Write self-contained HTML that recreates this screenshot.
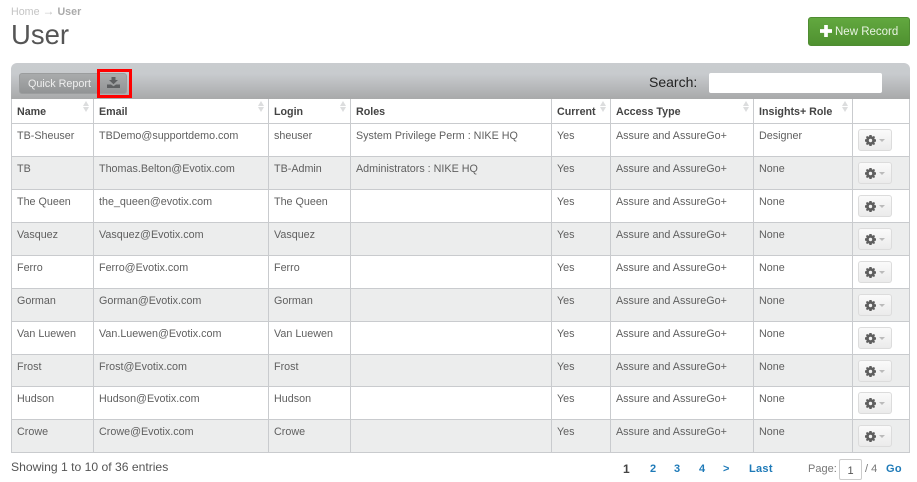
<!DOCTYPE html>
<html><head><meta charset="utf-8"><title>User</title>
<style>
*{box-sizing:border-box}
html,body{margin:0;padding:0;background:#fff;width:917px;height:480px;overflow:hidden;font-family:"Liberation Sans",sans-serif;color:#555}
.abs{position:absolute}
.crumb{left:11px;top:5px;font-size:10.700px;line-height:13px;color:#c4c4c4}
.crumb b{color:#aaa}
.crumb span{font-size:12px}
h1{position:absolute;left:11px;top:18px;margin:0;font-size:27.500px;line-height:34px;font-weight:400;color:#555}
.new{left:808px;top:17px;width:102px;height:29px;background:linear-gradient(#62a83f,#4f9130);border:1px solid #4f8c32;border-radius:3px;color:#e8f3e2;font-size:11.500px;line-height:28px;padding-left:26px}
.new svg{position:absolute;left:11px;top:7px}
.bar{left:11px;top:63px;width:899px;height:36px;background:linear-gradient(#c9cccf 0,#c8cbce 30%,#a8a9aa 100%);border-radius:6px 6px 0 0}
.qr{left:19px;top:73px;width:108px;height:21px;background:linear-gradient(#a9abac,#929495);border:1px solid #9b9d9e;border-radius:3px;color:#eee;font-size:10.800px;line-height:20px;padding-left:8px}
.red{left:97px;top:69px;width:35px;height:29px;border:3px solid #f00}
.lbl{left:649px;top:74px;font-size:14px;line-height:16px;color:#222}
.inp{left:709px;top:73px;width:173px;height:20px;background:#fff;border-radius:2px}
table{position:absolute;left:11px;top:99px;border-collapse:collapse;table-layout:fixed;width:898px;font-size:10.750px}
td,th{border:1px solid #c9cbce;padding:0 5px;vertical-align:top;text-align:left;overflow:hidden;white-space:nowrap;position:relative}
th{height:24px;padding-top:6px;line-height:14px;font-size:10.700px;font-weight:700;color:#444;background:#fff}
td{height:33px;padding-top:5px;line-height:14px;color:#5f5f5f}
tr:first-child th{border-top:0}
tbody tr:nth-child(even) td{background:#eceded}
tr.s td{height:32px}
th i{position:absolute;right:3px;top:2px;width:7px;height:11px}
th i:before,th i:after{content:"";position:absolute;left:0;border-left:3.500px solid transparent;border-right:3.500px solid transparent}
th i:before{top:0;border-bottom:5px solid #dcddde}
th i:after{top:6px;border-top:5px solid #dcddde}
.gear{position:absolute;left:5px;top:5px;width:34px;height:22px;background:linear-gradient(#fafafa,#ebebeb);border:1px solid #dcdcdc;border-radius:3px}
td.a{padding:0}
.gear svg{position:absolute;left:6px;top:5px}
.gear u{position:absolute;left:20px;top:9px;border-left:3px solid transparent;border-right:3px solid transparent;border-top:3px solid #bbb}
.foot{left:11px;top:460px;font-size:12.150px;line-height:15px;color:#555}
.p{top:462px;font-size:11px;line-height:14px;font-weight:700;color:#1e7ab8;letter-spacing:.3px}
.pi{left:839px;top:459px;width:23px;height:21px;border:1px solid #ccc;border-radius:2px;font-size:11px;color:#555;text-align:center;line-height:22px;background:#fff}
</style></head><body>
<svg width="0" height="0" style="position:absolute"><symbol id="g" viewBox="0 0 13 13"><path d="M5.200 0h2.600l.3 1.500 1.100.5 1.300-.9 1.400 1.400-.9 1.300.5 1.100 1.500.3v2.600l-1.500.3-.5 1.100.9 1.300-1.400 1.400-1.300-.9-1.100.5-.3 1.500H5.200l-.3-1.500-1.100-.5-1.300.9-1.400-1.400.9-1.300-.5-1.100L0 7.800V5.200l1.500-.3.500-1.100-.9-1.300 1.400-1.400 1.300.9 1.100-.5zM6.500 4.500a2 2 0 1 0 0 4 2 2 0 0 0 0-4z" fill="#5e5e5e" fill-rule="evenodd"/></symbol></svg>
<div class="abs crumb">Home <span>→</span> <b>User</b></div>
<h1>User</h1>
<div class="abs new"><svg width="12" height="12" viewBox="0 0 13 13"><path d="M4.500 0h4v4.500H13v4H8.500V13h-4V8.500H0v-4h4.500z" fill="#fff"/></svg>New Record</div>
<div class="abs bar"></div>
<div class="abs qr">Quick Report</div>
<svg class="abs" style="left:107px;top:77px" width="13" height="11" viewBox="0 0 13 11"><path d="M4.500 0h4v3H11L6.500 7.200 2 3h2.500zM0 7.500h4l2.500 1.700L9 7.500h4V11H0z" fill="#5e6062"/></svg>
<div class="abs red"></div>
<div class="abs lbl">Search:</div>
<div class="abs inp"></div>
<table>
<colgroup><col style="width:82px"><col style="width:175px"><col style="width:82px"><col style="width:201px"><col style="width:59px"><col style="width:143px"><col style="width:99px"><col style="width:57px"></colgroup>
<thead><tr><th>Name<i></i></th><th>Email<i></i></th><th>Login<i></i></th><th>Roles</th><th>Current<i></i></th><th>Access Type<i></i></th><th>Insights+ Role<i></i></th><th></th></tr></thead>
<tbody>
<tr><td>TB-Sheuser</td><td>TBDemo@supportdemo.com</td><td>sheuser</td><td>System Privilege Perm : NIKE HQ</td><td>Yes</td><td>Assure and AssureGo+</td><td>Designer</td><td class="a"><div class="gear"><svg width="11" height="11"><use href="#g"/></svg><u></u></div></td></tr>
<tr><td>TB</td><td>Thomas.Belton@Evotix.com</td><td>TB-Admin</td><td>Administrators : NIKE HQ</td><td>Yes</td><td>Assure and AssureGo+</td><td>None</td><td class="a"><div class="gear"><svg width="11" height="11"><use href="#g"/></svg><u></u></div></td></tr>
<tr><td>The Queen</td><td>the_queen@evotix.com</td><td>The Queen</td><td></td><td>Yes</td><td>Assure and AssureGo+</td><td>None</td><td class="a"><div class="gear"><svg width="11" height="11"><use href="#g"/></svg><u></u></div></td></tr>
<tr><td>Vasquez</td><td>Vasquez@Evotix.com</td><td>Vasquez</td><td></td><td>Yes</td><td>Assure and AssureGo+</td><td>None</td><td class="a"><div class="gear"><svg width="11" height="11"><use href="#g"/></svg><u></u></div></td></tr>
<tr><td>Ferro</td><td>Ferro@Evotix.com</td><td>Ferro</td><td></td><td>Yes</td><td>Assure and AssureGo+</td><td>None</td><td class="a"><div class="gear"><svg width="11" height="11"><use href="#g"/></svg><u></u></div></td></tr>
<tr><td>Gorman</td><td>Gorman@Evotix.com</td><td>Gorman</td><td></td><td>Yes</td><td>Assure and AssureGo+</td><td>None</td><td class="a"><div class="gear"><svg width="11" height="11"><use href="#g"/></svg><u></u></div></td></tr>
<tr><td>Van Luewen</td><td>Van.Luewen@Evotix.com</td><td>Van Luewen</td><td></td><td>Yes</td><td>Assure and AssureGo+</td><td>None</td><td class="a"><div class="gear"><svg width="11" height="11"><use href="#g"/></svg><u></u></div></td></tr>
<tr class="s"><td>Frost</td><td>Frost@Evotix.com</td><td>Frost</td><td></td><td>Yes</td><td>Assure and AssureGo+</td><td>None</td><td class="a"><div class="gear"><svg width="11" height="11"><use href="#g"/></svg><u></u></div></td></tr>
<tr><td>Hudson</td><td>Hudson@Evotix.com</td><td>Hudson</td><td></td><td>Yes</td><td>Assure and AssureGo+</td><td>None</td><td class="a"><div class="gear"><svg width="11" height="11"><use href="#g"/></svg><u></u></div></td></tr>
<tr><td>Crowe</td><td>Crowe@Evotix.com</td><td>Crowe</td><td></td><td>Yes</td><td>Assure and AssureGo+</td><td>None</td><td class="a"><div class="gear"><svg width="11" height="11"><use href="#g"/></svg><u></u></div></td></tr>
</tbody></table>
<div class="abs foot">Showing 1 to 10 of 36 entries</div>
<div class="abs p" style="left:623px;font-size:12px;color:#444">1</div>
<div class="abs p" style="left:650px">2</div>
<div class="abs p" style="left:674px">3</div>
<div class="abs p" style="left:699px">4</div>
<div class="abs p" style="left:723px">&gt;</div>
<div class="abs p" style="left:749px">Last</div>
<div class="abs" style="left:808px;top:462px;font-size:11px;line-height:14px;color:#777">Page:</div>
<div class="abs pi">1</div>
<div class="abs" style="left:865px;top:462px;font-size:11px;line-height:14px;color:#777">/ 4</div>
<div class="abs p" style="left:886px">Go</div>
</body></html>
